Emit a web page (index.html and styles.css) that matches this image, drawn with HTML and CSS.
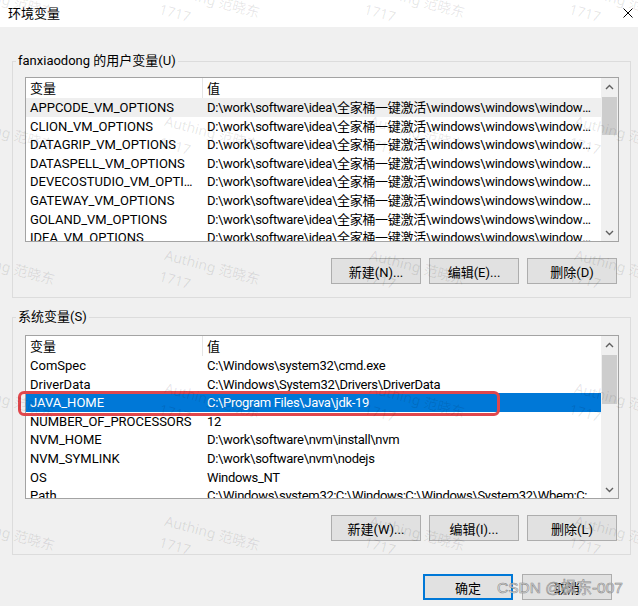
FILE: index.html
```html
<!DOCTYPE html>
<html lang="zh-CN">
<head>
<meta charset="UTF-8">
<title>环境变量</title>
<link rel="stylesheet" href="styles.css">
</head>
<body>
    <div class="window">
        <div class="titlebar">
            <span class="title">环境变量</span>
            <svg class="close" width="10" height="10" viewBox="0 0 10 10">
                <path d="M0.5 0.5 L9.5 9.5 M9.5 0.5 L0.5 9.5" stroke="#000" stroke-width="1" fill="none"/>
            </svg>
        </div>

        <div class="dialog">
            <fieldset class="group">
                <legend>fanxiaodong 的用户变量(U)</legend>
                <div class="listview">
                    <div class="list-main">
                        <div class="list-head"><span class="cell-name">变量</span><span class="cell-value">值</span></div>
                        <div class="row hover"><span class="cell-name">APPCODE_VM_OPTIONS</span><span class="cell-value">D:\work\software\idea\全家桶一键激活\windows\windows\windows\vmoptions\appcode.vmoptions</span></div>
                        <div class="row"><span class="cell-name">CLION_VM_OPTIONS</span><span class="cell-value">D:\work\software\idea\全家桶一键激活\windows\windows\windows\vmoptions\clion.vmoptions</span></div>
                        <div class="row"><span class="cell-name">DATAGRIP_VM_OPTIONS</span><span class="cell-value">D:\work\software\idea\全家桶一键激活\windows\windows\windows\vmoptions\datagrip.vmoptions</span></div>
                        <div class="row"><span class="cell-name">DATASPELL_VM_OPTIONS</span><span class="cell-value">D:\work\software\idea\全家桶一键激活\windows\windows\windows\vmoptions\dataspell.vmoptions</span></div>
                        <div class="row"><span class="cell-name">DEVECOSTUDIO_VM_OPTIONS</span><span class="cell-value">D:\work\software\idea\全家桶一键激活\windows\windows\windows\vmoptions\devecostudio.vmoptions</span></div>
                        <div class="row"><span class="cell-name">GATEWAY_VM_OPTIONS</span><span class="cell-value">D:\work\software\idea\全家桶一键激活\windows\windows\windows\vmoptions\gateway.vmoptions</span></div>
                        <div class="row"><span class="cell-name">GOLAND_VM_OPTIONS</span><span class="cell-value">D:\work\software\idea\全家桶一键激活\windows\windows\windows\vmoptions\goland.vmoptions</span></div>
                        <div class="row"><span class="cell-name">IDEA_VM_OPTIONS</span><span class="cell-value">D:\work\software\idea\全家桶一键激活\windows\windows\windows\vmoptions\idea.vmoptions</span></div>
                    </div>
                    <div class="scrollbar">
                        <div class="scroll-arrow">
                            <svg width="9" height="6" viewBox="0 0 9 6"><path d="M1 5 L4.5 1.5 L8 5" stroke="#606060" stroke-width="1.4" fill="none"/></svg>
                        </div>
                        <div class="scroll-track"><div class="thumb"></div></div>
                        <div class="scroll-arrow">
                            <svg width="9" height="6" viewBox="0 0 9 6"><path d="M1 1 L4.5 4.5 L8 1" stroke="#606060" stroke-width="1.4" fill="none"/></svg>
                        </div>
                    </div>
                </div>
                <div class="buttons">
                    <button class="btn">新建(N)...</button>
                    <button class="btn">编辑(E)...</button>
                    <button class="btn">删除(D)</button>
                </div>
            </fieldset>

            <fieldset class="group system">
                <legend>系统变量(S)</legend>
                <div class="listview">
                    <div class="list-main">
                        <div class="list-head"><span class="cell-name">变量</span><span class="cell-value">值</span></div>
                        <div class="row"><span class="cell-name">ComSpec</span><span class="cell-value">C:\Windows\system32\cmd.exe</span></div>
                        <div class="row"><span class="cell-name">DriverData</span><span class="cell-value">C:\Windows\System32\Drivers\DriverData</span></div>
                        <div class="row selected"><span class="cell-name">JAVA_HOME</span><span class="cell-value">C:\Program Files\Java\jdk-19</span></div>
                        <div class="row"><span class="cell-name">NUMBER_OF_PROCESSORS</span><span class="cell-value">12</span></div>
                        <div class="row"><span class="cell-name">NVM_HOME</span><span class="cell-value">D:\work\software\nvm\install\nvm</span></div>
                        <div class="row"><span class="cell-name">NVM_SYMLINK</span><span class="cell-value">D:\work\software\nvm\nodejs</span></div>
                        <div class="row"><span class="cell-name">OS</span><span class="cell-value">Windows_NT</span></div>
                        <div class="row"><span class="cell-name">Path</span><span class="cell-value">C:\Windows\system32;C:\Windows;C:\Windows\System32\Wbem;C:\Windows\System32\WindowsPowerShell\v1.0\</span></div>
                    </div>
                    <div class="scrollbar">
                        <div class="scroll-arrow">
                            <svg width="9" height="6" viewBox="0 0 9 6"><path d="M1 5 L4.5 1.5 L8 5" stroke="#606060" stroke-width="1.4" fill="none"/></svg>
                        </div>
                        <div class="scroll-track"><div class="thumb"></div></div>
                        <div class="scroll-arrow">
                            <svg width="9" height="6" viewBox="0 0 9 6"><path d="M1 1 L4.5 4.5 L8 1" stroke="#606060" stroke-width="1.4" fill="none"/></svg>
                        </div>
                    </div>
                </div>
                <div class="buttons">
                    <button class="btn">新建(W)...</button>
                    <button class="btn">编辑(I)...</button>
                    <button class="btn">删除(L)</button>
                </div>
            </fieldset>

            <div class="dialog-buttons">
                <button class="btn default">确定</button>
                <button class="btn">取消</button>
            </div>
        </div>

        <!-- annotation around the selected row -->
        <div class="highlight-box"></div>

        <!-- faint tiled watermark -->
        <div class="watermark">
            <div class="mark">Authing 范晓东<br>1717</div><div class="mark">Authing 范晓东<br>1717</div><div class="mark">Authing 范晓东<br>1717</div><div class="mark">Authing 范晓东<br>1717</div>
            <div class="mark">Authing 范晓东<br>1717</div><div class="mark">Authing 范晓东<br>1717</div><div class="mark">Authing 范晓东<br>1717</div><div class="mark">Authing 范晓东<br>1717</div>
            <div class="mark">Authing 范晓东<br>1717</div><div class="mark">Authing 范晓东<br>1717</div><div class="mark">Authing 范晓东<br>1717</div><div class="mark">Authing 范晓东<br>1717</div>
            <div class="mark">Authing 范晓东<br>1717</div><div class="mark">Authing 范晓东<br>1717</div><div class="mark">Authing 范晓东<br>1717</div><div class="mark">Authing 范晓东<br>1717</div>
            <div class="mark">Authing 范晓东<br>1717</div><div class="mark">Authing 范晓东<br>1717</div><div class="mark">Authing 范晓东<br>1717</div><div class="mark">Authing 范晓东<br>1717</div>
        </div>

        <div class="csdn-mark">CSDN @枫东-007</div>
    </div>
</body>
</html>
```

FILE: styles.css
```css
* {
    box-sizing: border-box;
}
body {
    margin: 0;
    background-color: #f0f0f0;
    font-family: Roboto, "Noto Sans CJK SC", sans-serif;
    font-size: 13px;
    color: #000;
}
.window {
    position: relative;
    width: 638px;
    height: 606px;
    overflow: hidden;
    background-color: #f0f0f0;
}
.titlebar {
    height: 27px;
    background-color: #fff;
    display: flex;
    align-items: center;
    justify-content: space-between;
    padding: 0 5px 2px 8px;
}
.dialog {
    padding: 25px 7px 0 12px;
}
.group {
    margin: 0;
    min-width: 0;
    padding: 7px 11px 13px 12px;
    border: 1px solid #dcdcdc;
}
.group legend {
    padding: 0 2px;
    margin-left: -9px;
    line-height: 18px;
}
.group + .group {
    margin-top: 10px;
}
.group.system {
    padding-top: 9px;
}
.listview {
    display: flex;
    height: 165px;
    border: 1px solid #a3a3a3;
    background-color: #fff;
}
.system .listview {
    height: 164px;
}
.list-main {
    flex: 1;
    min-width: 0;
    overflow: hidden;
}
.list-head,
.row {
    display: flex;
    white-space: nowrap;
}
.list-head {
    height: 20px;
    line-height: 21px;
}
.row {
    height: 18.6px;
    line-height: 19.6px;
}
.cell-name {
    flex: none;
    width: 177px;
    padding: 0 4px;
    overflow: hidden;
    text-overflow: ellipsis;
}
.list-head .cell-name {
    border-right: 1px solid #e5e5e5;
}
.cell-value {
    flex: 1;
    min-width: 0;
    padding: 0 4px;
    overflow: hidden;
    text-overflow: ellipsis;
    letter-spacing: -0.3px;
}
.row.hover {
    background-color: #efefef;
}
.row.selected {
    background-color: #0078d7;
    color: #fff;
}
.scrollbar {
    flex: none;
    width: 17px;
    display: flex;
    flex-direction: column;
    background-color: #f0f0f0;
}
.scroll-arrow {
    height: 17px;
    display: flex;
    align-items: center;
    justify-content: center;
}
.scroll-track {
    flex: 1;
    padding: 2px 1px 0;
}
.thumb {
    height: 38px;
    background-color: #cdcdcd;
}
.system .thumb {
    height: 49px;
}
.buttons {
    display: flex;
    justify-content: flex-end;
    gap: 8px;
    margin-top: 16px;
    padding-right: 2px;
}
.btn {
    width: 90px;
    height: 26px;
    padding: 0;
    background-color: #e1e1e1;
    border: 1px solid #adadad;
    font: inherit;
    color: #000;
}
.btn.default {
    border-color: #0078d7;
    box-shadow: inset 0 0 0 1px #0078d7;
}
.dialog-buttons {
    display: flex;
    justify-content: flex-end;
    gap: 9px;
    margin-top: 19px;
    padding-right: 19px;
}
.highlight-box {
    position: absolute;
    left: 18px;
    top: 391px;
    width: 482px;
    height: 25px;
    border: 3px solid #e0474c;
    border-radius: 6px;
}
.watermark {
    position: absolute;
    left: -37px;
    top: -23px;
    display: grid;
    grid-template-columns: repeat(4, 205px);
    grid-auto-rows: 133.3px;
    pointer-events: none;
}
.mark {
    font-family: "Noto Sans", "Noto Sans CJK SC", sans-serif;
    font-size: 14px;
    line-height: 22px;
    color: rgba(0, 0, 0, 0.1);
    white-space: nowrap;
    transform: rotate(15deg);
    transform-origin: 0 0;
}
.csdn-mark {
    position: absolute;
    left: 497px;
    top: 576px;
    white-space: nowrap;
    font-family: "Liberation Sans", "Noto Sans CJK SC", sans-serif;
    font-size: 15.5px;
    line-height: 24px;
    color: rgba(240, 240, 240, 0.85);
    -webkit-text-stroke: 0.6px #8a8a8a;
}
```
